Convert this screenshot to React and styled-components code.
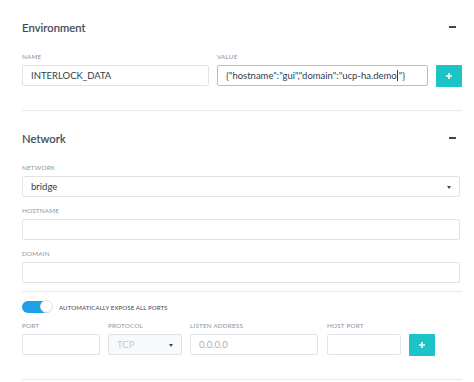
import React from 'react';
import styled, { createGlobalStyle } from 'styled-components';

const GlobalStyle = createGlobalStyle`
    html, body {
        margin: 0;
        padding: 0;
        background: #ffffff;
    }
    body {
        font-family: Lato, "Open Sans", "Liberation Sans", sans-serif;
        color: #3a4654;
    }
`

const Page = styled.div`
    width: 474px;
    box-sizing: border-box;
    padding: 0 12px 0 22px;
`

const Section = styled.div`
    display: flex;
    flex-direction: column;
    padding: 18px 0 24px 0;
    border-bottom: 1px solid #e6e9ed;
`

const Header = styled.div`
    display: flex;
    align-items: center;
    justify-content: space-between;
    height: 18px;
    margin-bottom: ${props => props.gap || 17}px;
`

const Title = styled.div`
    font-size: 11.2px;
    font-weight: 400;
    color: #3a4757;
    letter-spacing: 0.1px;
    -webkit-text-stroke: 0.2px #3a4757;
`

const Collapse = styled.span`
    display: block;
    width: 7px;
    height: 2px;
    margin-right: 6px;
    background: #3a4654;
`

const Fields = styled.div`
    display: flex;
    flex-direction: column;
    gap: 10px;
    width: 438px;
`

const Row = styled.div`
    display: flex;
    align-items: flex-end;
    margin-top: ${props => props.mt || 0}px;
`

const Field = styled.div`
    display: flex;
    flex-direction: column;
    width: ${props => props.w ? props.w + 'px' : 'auto'};
    flex: ${props => props.w ? 'none' : '1'};
    margin-right: ${props => props.mr || 0}px;
`

const Label = styled.div`
    font-size: 6.3px;
    line-height: 8px;
    height: 8px;
    color: #8a939e;
    text-transform: uppercase;
    letter-spacing: 0.2px;
    margin-bottom: 4px;
`

const Input = styled.div`
    position: relative;
    display: flex;
    align-items: center;
    box-sizing: border-box;
    height: 21px;
    padding: 0 8px;
    border: 1px solid ${props => props.focused ? '#b3bfcc' : '#e0e4e9'};
    border-radius: 2px;
    background: ${props => props.disabled ? '#f8f9fa' : '#ffffff'};
    font-size: 9.5px;
    color: ${props => props.muted ? '#c3c9d0' : '#333d48'};
    white-space: nowrap;
    overflow: hidden;
`

const Placeholder = styled.span`
    color: #a9b0b8;
`

const Caret = styled.span`
    display: inline-block;
    width: 1px;
    height: 11px;
    margin: 0 0.5px;
    background: #333d48;
    vertical-align: middle;
`

const Arrow = styled.span`
    position: absolute;
    right: ${props => props.r || 8}px;
    top: 9px;
    width: 0;
    height: 0;
    border-left: 2.5px solid transparent;
    border-right: 2.5px solid transparent;
    border-top: 3px solid #3a4654;
`

const AddButton = styled.button`
    flex: none;
    width: 26px;
    height: 22px;
    padding: 0;
    border: none;
    border-radius: 1px;
    background: #1cc3c7;
    display: flex;
    align-items: center;
    justify-content: center;
    margin-bottom: ${props => props.mb || 0}px;
`

const Toggle = styled.div`
    position: relative;
    width: 30px;
    height: 12px;
    border-radius: 6px;
    background: #1f9fe6;
    flex: none;
`

const Knob = styled.span`
    position: absolute;
    right: -1px;
    top: -1px;
    width: 13px;
    height: 13px;
    border-radius: 50%;
    background: #ffffff;
    border: 1px solid #dfe3e8;
    box-sizing: border-box;
`

const ToggleRow = styled.div`
    display: flex;
    align-items: center;
    gap: 7px;
    height: 12px;
    margin-top: -1px;
`

const ToggleLabel = styled.span`
    font-size: 6.1px;
    color: #3a4654;
    text-transform: uppercase;
    letter-spacing: 0.1px;
`

const Divider = styled.div`
    height: 1px;
    background: #e6e9ed;
    margin: -2px -2px 0 0;
    width: 440px;
`

const Plus = () => (
    <svg width="8" height="8" viewBox="0 0 8 8">
        <path d="M4 1v6M1 4h6" stroke="#ffffff" strokeWidth="1.6" />
    </svg>
)

const App = () => {
    return (
        <Page>
            <GlobalStyle />
            <Section>
                <Header gap={17}>
                    <Title>Environment</Title>
                    <Collapse />
                </Header>
                <Row>
                    <Field w={187} mr={8}>
                        <Label>Name</Label>
                        <Input>INTERLOCK_DATA</Input>
                    </Field>
                    <Field w={211} mr={8}>
                        <Label>Value</Label>
                        <Input focused>
                            {'{"hostname":"gui","domain":"ucp-ha.demo'}<Caret />{'"}'}
                        </Input>
                    </Field>
                    <AddButton mb={-1}><Plus /></AddButton>
                </Row>
            </Section>

            <Section>
                <Header gap={17}>
                    <Title>Network</Title>
                    <Collapse />
                </Header>
                <Fields>
                    <Field>
                        <Label>Network</Label>
                        <Input>bridge<Arrow r={8} /></Input>
                    </Field>
                    <Field>
                        <Label>Hostname</Label>
                        <Input />
                    </Field>
                    <Field>
                        <Label>Domain</Label>
                        <Input />
                    </Field>
                    <Divider />
                    <ToggleRow>
                        <Toggle><Knob /></Toggle>
                        <ToggleLabel>Automatically expose all ports</ToggleLabel>
                    </ToggleRow>
                </Fields>
                <Row mt={9}>
                    <Field w={78} mr={8}>
                        <Label>Port</Label>
                        <Input />
                    </Field>
                    <Field w={74} mr={8}>
                        <Label>Protocol</Label>
                        <Input disabled muted>TCP<Arrow r={8} /></Input>
                    </Field>
                    <Field w={128} mr={9}>
                        <Label>Listen address</Label>
                        <Input><Placeholder>0.0.0.0</Placeholder></Input>
                    </Field>
                    <Field w={74} mr={8}>
                        <Label>Host port</Label>
                        <Input />
                    </Field>
                    <AddButton mb={-1}><Plus /></AddButton>
                </Row>
            </Section>
        </Page>
    )
}

export default App;
